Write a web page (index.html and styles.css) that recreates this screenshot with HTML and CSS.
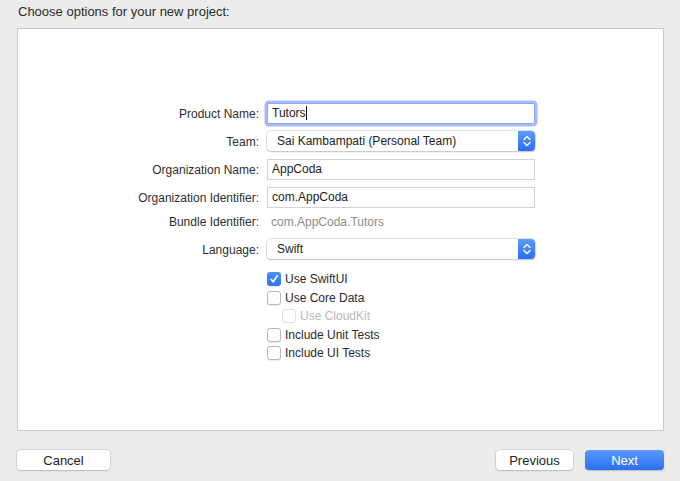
FILE: index.html
```html
<!DOCTYPE html>
<html>
<head>
    <title>Choose options for your new project</title>
    <link rel="stylesheet" href="styles.css">
</head>
<body>
    <div class="header">Choose options for your new project:</div>

    <div class="panel">
        <form class="options">
            <label class="label" for="product_name">Product Name:</label>
            <div class="field focused"><span id="product_name">Tutors</span><span class="caret"></span></div>

            <label class="label">Team:</label>
            <div class="popup">
                <span>Sai Kambampati (Personal Team)</span>
                <span class="stepper">
                    <svg width="8" height="12" viewBox="0 0 8 12"><path d="M1 4.5 L4 1.5 L7 4.5 M1 7.5 L4 10.5 L7 7.5" fill="none" stroke="#fff" stroke-width="1.4" stroke-linecap="round" stroke-linejoin="round"/></svg>
                </span>
            </div>

            <label class="label">Organization Name:</label>
            <div class="field">AppCoda</div>

            <label class="label">Organization Identifier:</label>
            <div class="field">com.AppCoda</div>

            <label class="label short">Bundle Identifier:</label>
            <div class="value">com.AppCoda.Tutors</div>

            <label class="label">Language:</label>
            <div class="popup">
                <span>Swift</span>
                <span class="stepper">
                    <svg width="8" height="12" viewBox="0 0 8 12"><path d="M1 4.5 L4 1.5 L7 4.5 M1 7.5 L4 10.5 L7 7.5" fill="none" stroke="#fff" stroke-width="1.4" stroke-linecap="round" stroke-linejoin="round"/></svg>
                </span>
            </div>

            <div class="checks">
                <div class="check">
                    <span class="box checked">
                        <svg width="10" height="10" viewBox="0 0 10 10"><path d="M2 5.3 L4.2 7.8 L8.3 1.8" fill="none" stroke="#fff" stroke-width="1.6" stroke-linecap="round" stroke-linejoin="round"/></svg>
                    </span>
                    Use SwiftUI
                </div>
                <div class="check"><span class="box"></span>Use Core Data</div>
                <div class="check sub disabled"><span class="box"></span>Use CloudKit</div>
                <div class="check"><span class="box"></span>Include Unit Tests</div>
                <div class="check"><span class="box"></span>Include UI Tests</div>
            </div>
        </form>
    </div>

    <div class="footer">
        <button class="btn cancel" type="button">Cancel</button>
        <div class="nav">
            <button class="btn previous" type="button">Previous</button>
            <button class="btn primary" type="button">Next</button>
        </div>
    </div>
</body>
</html>
```

FILE: styles.css
```css
body {
    margin: 0;
    background-color: #ececec;
    font-family: "Liberation Sans", Arial, sans-serif;
    color: #262626;
    width: 680px;
    height: 481px;
    overflow: hidden;
}
.header {
    height: 28px;
    padding-left: 18px;
    font-size: 13px;
    line-height: 24px;
    color: #2b2b2b;
}
.panel {
    margin: 0 16px 0 17px;
    height: 401px;
    background-color: #fff;
    border: 1px solid #c9c9c9;
}
.options {
    display: grid;
    grid-template-columns: 241px 268px;
    grid-template-rows: 21px 21px 21px 21px 17px 21px auto;
    column-gap: 8px;
    row-gap: 7px;
    padding-top: 74px;
    font-size: 12px;
}
.label {
    text-align: right;
    align-self: center;
    color: #2e2e2e;
}
.label.short {
    align-self: start;
    line-height: 14px;
}
.value {
    color: #8b8b8b;
    padding-left: 4px;
    line-height: 14px;
}
.field {
    box-sizing: border-box;
    height: 21px;
    border: 1px solid #d3d3d3;
    padding: 0 4px;
    line-height: 19px;
    color: #222;
    background-color: #fff;
}
.focused {
    border-color: #8ea7ee;
    box-shadow: 0 0 0 2.5px #a9b9f6;
    border-radius: 2px;
}
.caret {
    display: inline-block;
    width: 1px;
    height: 14px;
    background-color: #111;
    vertical-align: -3px;
}
.popup {
    box-sizing: border-box;
    height: 20px;
    display: flex;
    align-items: center;
    justify-content: space-between;
    padding-left: 10px;
    background-color: #fff;
    border-radius: 4px;
    box-shadow: 0 0 0 0.5px #c4c4c4, 0 1px 1.5px rgba(0, 0, 0, 0.22);
    color: #222;
}
.stepper {
    width: 17px;
    height: 20px;
    border-radius: 0 4px 4px 0;
    background: linear-gradient(#5d9bfb, #2b6ef5);
    display: flex;
    align-items: center;
    justify-content: center;
}
.checks {
    grid-column: 2;
    padding-top: 3px;
}
.check {
    height: 18.5px;
    display: flex;
    align-items: center;
    color: #2a2a2a;
}
.box {
    box-sizing: border-box;
    width: 14px;
    height: 14px;
    margin-right: 4px;
    border: 1px solid #b9b9b9;
    border-radius: 3px;
    background-color: #fff;
    box-shadow: 0 0.5px 1px rgba(0, 0, 0, 0.08);
    display: flex;
    align-items: center;
    justify-content: center;
}
.box.checked {
    border: none;
    background: linear-gradient(#4c8ffa, #2f74f6);
}
.sub {
    padding-left: 15px;
}
.disabled {
    color: #b9b9b9;
}
.disabled .box {
    border-color: #e0e0e0;
    box-shadow: none;
}
.footer {
    display: flex;
    justify-content: space-between;
    padding: 19px 16px 0 17px;
}
.nav {
    display: flex;
    gap: 12px;
}
.btn {
    height: 20px;
    padding: 0;
    font-family: "Liberation Sans", Arial, sans-serif;
    font-size: 13px;
    color: #222;
    background-color: #fff;
    border: none;
    border-radius: 4px;
    box-shadow: 0 0 0 0.5px #bdbdbd, 0 1px 1.5px rgba(0, 0, 0, 0.2);
}
.cancel {
    width: 93px;
}
.previous {
    width: 77px;
}
.primary {
    width: 79px;
    color: #fff;
    background: linear-gradient(#5a9afb, #2c6ef5);
    box-shadow: 0 1px 1.5px rgba(0, 0, 0, 0.2);
}
```
